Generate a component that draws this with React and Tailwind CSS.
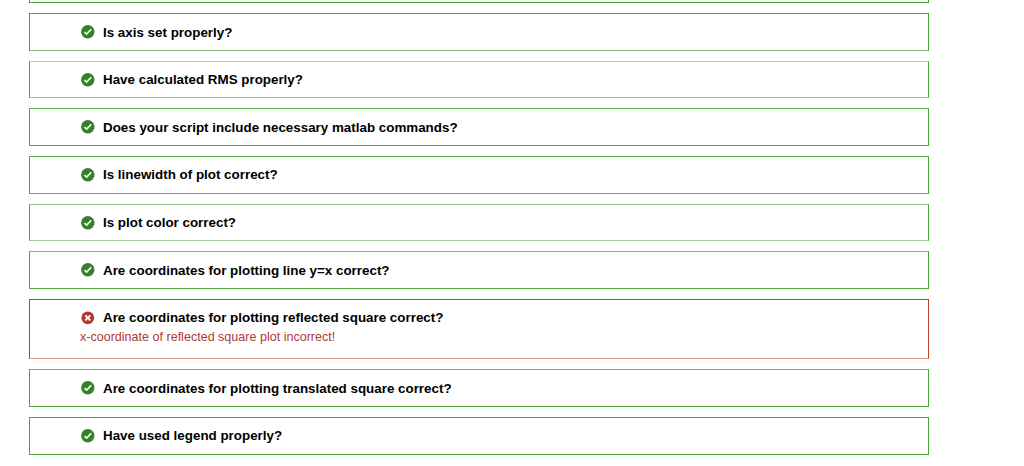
const checks = [
  { label: 'Is axis set properly?', edges: 'border-t-[#54a73f] border-b-[#7bbd6c]' },
  { label: 'Have calculated RMS properly?', edges: 'border-t-[#a8d59e] border-b-[#90c983]' },
  { label: 'Does your script include necessary matlab commands?', edges: 'border-t-[#60b054] border-b-[#54a73f]' },
  { label: 'Is linewidth of plot correct?', edges: 'border-t-[#54a73f] border-b-[#5cae4e]' },
  { label: 'Is plot color correct?', edges: 'border-t-[#8bc87f] border-b-[#a8d59e]' },
  { label: 'Are coordinates for plotting line y=x correct?', edges: 'border-t-[#7bbd6c] border-b-[#54a73f]' },
  {
    label: 'Are coordinates for plotting reflected square correct?',
    error: 'x-coordinate of reflected square plot incorrect!',
  },
  { label: 'Are coordinates for plotting translated square correct?', edges: 'border-t-[#6db45f] border-b-[#4da73c]' },
  { label: 'Have used legend properly?', edges: 'border-t-[#4da73c] border-b-[#4da73c]' },
]

function PassIcon() {
  return (
    <svg viewBox="0 0 14 14" className="w-3.5 h-3.5 mb-px shrink-0">
      <circle cx="6.8" cy="6.8" r="6.7" fill="#367f2b" />
      <path d="M3.5 7.1 5.7 9.1 10.2 4.3" fill="none" stroke="#fff" strokeWidth="1.6" />
    </svg>
  )
}

function FailIcon() {
  return (
    <svg viewBox="0 0 14 14" className="w-3.5 h-3.5 mb-px shrink-0">
      <circle cx="6.8" cy="6.8" r="6.4" fill="#b03a32" />
      <path d="M4.3 4.3 9.3 9.3M9.3 4.3 4.3 9.3" fill="none" stroke="#fff" strokeWidth="1.9" />
    </svg>
  )
}

function CheckRow({ label, error, edges = '' }) {
  const box = error
    ? 'h-[60.33px] border-[#c0402f] border-b-[#e09a92]'
    : `h-[37.67px] border-x-[#4da73c] ${edges}`

  return (
    <li className={`border pl-[51px] pt-[9px] ${box}`}>
      <div className="flex items-center gap-2 h-[19px]">
        {error ? <FailIcon /> : <PassIcon />}
        <span className="text-[13.38px] leading-5 font-bold text-black whitespace-nowrap">{label}</span>
      </div>
      {error && <p className="-ml-px text-[12.55px] leading-[19px] text-[#b03a35] whitespace-nowrap">{error}</p>}
    </li>
  )
}

export default function App() {
  return (
    <div className="h-[466px] overflow-hidden bg-white font-['Liberation_Sans',Arial,sans-serif]">
      {/* Bottom edge of the row scrolled off the top */}
      <div className="ml-[29px] w-[900px] h-[3px] border border-t-0 border-[#4da73c]" />
      <ul className="ml-[29px] mt-[10px] w-[900px] flex flex-col gap-[10px]">
        {checks.map((check) => (
          <CheckRow key={check.label} {...check} />
        ))}
      </ul>
    </div>
  )
}
